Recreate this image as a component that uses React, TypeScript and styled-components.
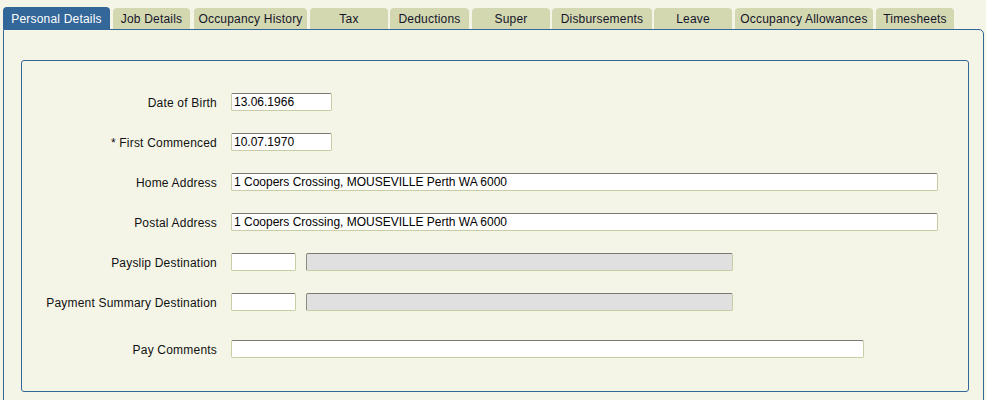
import React from "react";
import styled, { createGlobalStyle } from "styled-components";

const Global = createGlobalStyle`
  html, body { margin: 0; padding: 0; background: #f4f5e7; }
  body { font-family: "Liberation Sans", Arial, sans-serif; font-size: 12px; color: #111; letter-spacing: 0.2px; }
`;

const Page = styled.div`
  width: 986px;
  height: 400px;
  overflow: hidden;
  background: #f4f5e7;
  padding: 7px 0 0 3px;
  box-sizing: border-box;
`;

const TabBar = styled.div`
  display: flex;
  align-items: flex-end;
  height: 22px;
`;

const Tab = styled.div<{ $active?: boolean; $w: number; $gap: number }>`
  width: ${(p) => p.$w}px;
  margin-right: ${(p) => p.$gap}px;
  height: ${(p) => (p.$active ? 22 : 21)}px;
  box-sizing: border-box;
  display: flex;
  align-items: center;
  justify-content: center;
  border-radius: 4px 4px 0 0;
  background: ${(p) => (p.$active ? "#336699" : "#d3d8b1")};
  color: ${(p) => (p.$active ? "#ffffff" : "#14142a")};
  font-size: 12px;
  white-space: nowrap;
  padding-top: ${(p) => (p.$active ? 1 : 0)}px;
`;

const Panel = styled.div`
  width: 981px;
  height: 400px;
  box-sizing: border-box;
  border: 1px solid #336699;
  border-top-right-radius: 5px;
  padding: 30px 14px 0 17px;
`;

const FieldSet = styled.div`
  width: 948px;
  box-sizing: border-box;
  border: 1px solid #336699;
  border-radius: 3px;
  padding: 32px 0 33px 0;
  display: grid;
  grid-template-columns: 195px 1fr;
  column-gap: 14px;
  row-gap: 22px;
  align-items: center;
`;

const Label = styled.div<{ $extra?: number }>`
  text-align: right;
  font-size: 12px;
  color: #111;
  padding-top: 1px;
  margin-top: ${(p) => p.$extra ?? 0}px;
`;

const Fields = styled.div<{ $extra?: number }>`
  display: flex;
  gap: 10px;
  align-items: center;
  margin-top: ${(p) => p.$extra ?? 0}px;
`;

const Input = styled.div<{ $w: number; $disabled?: boolean }>`
  width: ${(p) => p.$w}px;
  height: 18px;
  box-sizing: border-box;
  background: ${(p) => (p.$disabled ? "#e0e0e0" : "#ffffff")};
  border: 1px solid #c9cda3;
  border-top-color: #7a7a72;
  border-left-color: ${(p) => (p.$disabled ? "#8a8a80" : "#c9cda3")};
  border-radius: 2px;
  padding: 0 2px;
  font-size: 12px;
  letter-spacing: 0;
  line-height: 16px;
  color: #000;
  white-space: nowrap;
  overflow: hidden;
`;

const tabs: { name: string; w: number; gap: number }[] = [
  { name: "Personal Details", w: 107, gap: 3 },
  { name: "Job Details", w: 77, gap: 4 },
  { name: "Occupancy History", w: 113, gap: 3 },
  { name: "Tax", w: 78, gap: 2 },
  { name: "Deductions", w: 79, gap: 3 },
  { name: "Super", w: 78, gap: 2 },
  { name: "Disbursements", w: 100, gap: 2 },
  { name: "Leave", w: 78, gap: 3 },
  { name: "Occupancy Allowances", w: 138, gap: 3 },
  { name: "Timesheets", w: 78, gap: 0 },
];

export default function App() {
  return (
    <>
      <Global />
      <Page>
        <TabBar>
          {tabs.map((t, i) => (
            <Tab key={t.name} $active={i === 0} $w={t.w} $gap={t.gap}>
              {t.name}
            </Tab>
          ))}
        </TabBar>
        <Panel>
          <FieldSet>
            <Label>Date of Birth</Label>
            <Fields>
              <Input $w={101}>13.06.1966</Input>
            </Fields>

            <Label>* First Commenced</Label>
            <Fields>
              <Input $w={101}>10.07.1970</Input>
            </Fields>

            <Label>Home Address</Label>
            <Fields>
              <Input $w={707}>1 Coopers Crossing, MOUSEVILLE Perth WA 6000</Input>
            </Fields>

            <Label>Postal Address</Label>
            <Fields>
              <Input $w={707}>1 Coopers Crossing, MOUSEVILLE Perth WA 6000</Input>
            </Fields>

            <Label>Payslip Destination</Label>
            <Fields>
              <Input $w={65} />
              <Input $w={427} $disabled />
            </Fields>

            <Label>Payment Summary Destination</Label>
            <Fields>
              <Input $w={65} />
              <Input $w={427} $disabled />
            </Fields>

            <Label $extra={7}>Pay Comments</Label>
            <Fields $extra={7}>
              <Input $w={633} />
            </Fields>
          </FieldSet>
        </Panel>
      </Page>
    </>
  );
}
